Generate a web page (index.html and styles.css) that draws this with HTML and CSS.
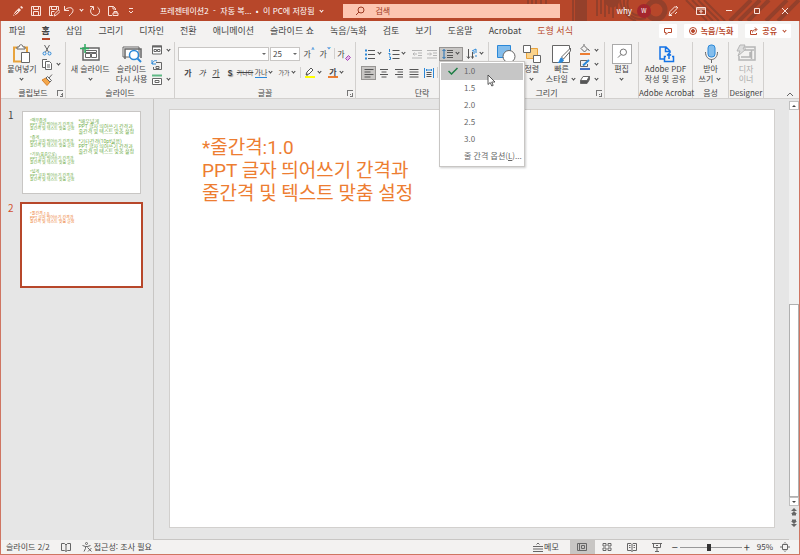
FILE: index.html
```html
<!DOCTYPE html>
<html lang="ko">
<head>
<meta charset="UTF-8">
<meta name="viewport" content="width=device-width, initial-scale=1.0">
<title>프레젠테이션2</title>
<link rel="stylesheet" href="styles.css">
</head>
<body>
<div class="window">

    <header class="titlebar">
        <div class="quick-access">
            <button class="qa" aria-label="펜"><svg width="12" height="12" viewBox="0 0 12 12"><path d="M1 11l2-4 4-4 2 2-4 4zM8 2l1.500-1 1.500 1.500L10 4z" fill="#fbe3dc" stroke="none"/><path d="M2 10l4-4" stroke="#b7472a"/></svg></button>
            <button class="qa" aria-label="저장"><svg width="12" height="12" viewBox="0 0 12 12"><path d="M1.500 1.500h9v9h-9zM3.500 1.500v3h5v-3M3.500 10.500v-4h5v4"/></svg></button>
            <button class="qa" aria-label="다른 이름으로 저장"><svg width="12" height="12" viewBox="0 0 12 12"><path d="M5 10.500H1.500v-9h9V5M3.500 1.500v3h5v-3M3.500 10v-3.500h3M6 11l1-2.500L10.500 5 12 6.500 8.500 10z"/></svg></button>
            <button class="qa" aria-label="실행 취소"><svg width="12" height="12" viewBox="0 0 12 12"><path d="M1.500 1v4.500H6M1.500 5.500C4 2 10 1.500 10 5.500 10 7.500 8 9 6 11"/></svg><i class="caret"></i></button>
            <button class="qa" aria-label="다시 실행"><svg width="12" height="12" viewBox="0 0 12 12"><path d="M1 1.500h3.500V5M4 2a4.500 4.500 0 1 0 4.500.2"/></svg></button>
            <button class="qa" aria-label="인쇄 미리 보기"><svg width="12" height="12" viewBox="0 0 12 12"><path d="M5 10.500H1.500v-9h5l2 2V5M6 1.500V4h2.500M6 10.500V8h5v2.500zM7 8V6.500h3V8"/></svg></button>
            <button class="qa" aria-label="사용자 지정"><svg width="8" height="8" viewBox="0 0 8 8"><path d="M2 1.500h4M2 4l2 2 2-2"/></svg></button>
            <span class="doc-name">프레젠테이션2&nbsp; -&nbsp; 자동 복...&nbsp; •&nbsp; 이 PC에 저장됨 <i class="caret"></i></span>
        </div>
        <label class="search">
            <svg width="10" height="10" viewBox="0 0 10 10"><circle cx="6" cy="4" r="3"/><path d="M4 6L1 9"/></svg>
            <input type="text" placeholder="검색" aria-label="검색">
        </label>
        <div class="account">
            <svg class="pattern" viewBox="0 0 280 21" preserveAspectRatio="xMaxYMin slice">
                <path d="M8 0v8M12 0v5M16 0v12M21 0v6M26 0v12M53 0v21M77 0v16M81 0v14M85 0v17M89 0v14M93 0v18M97 0v10" stroke-width="2"/>
                <path d="M61 0v21" stroke-width="12"/>
                <circle cx="92" cy="0" r="7" class="fill"/>
                <circle cx="136" cy="10" r="9" stroke-width="5"/>
                <path d="M108 0a12 12 0 0 0 20 12M104 0a17 17 0 0 0 22 18M100 0a24 24 0 0 0 16 21" stroke-width="2"/>
                <path d="M166 0l21 21M172 0l21 21M178 0l21 21M184 0l21 21" stroke-width="2"/>
                <path d="M210 21L231 0M219 21L240 0M228 21L249 0M246 21L267 0M258 21l21-21" stroke-width="4"/>
            </svg>
            <span class="user">why</span>
            <span class="avatar">W</span>
            <button class="win-btn" aria-label="그리기"><svg width="12" height="12" viewBox="0 0 12 12"><path d="M2 10.500l1-4 5-5 2 2-5 5zM8 9l2-2M9 1l2 2M2 10.500h3"/></svg></button>
            <button class="win-btn" aria-label="리본 표시 옵션"><svg width="12" height="12" viewBox="0 0 12 12"><path d="M1.500 2.500h9v7h-9zM1.500 4h9M6 8.500V5.500M4.500 7L6 5.500 7.500 7"/></svg></button>
            <button class="win-btn" aria-label="최소화"><svg width="12" height="12" viewBox="0 0 12 12"><path d="M3 5.500h6"/></svg></button>
            <button class="win-btn" aria-label="최대화"><svg width="12" height="12" viewBox="0 0 12 12"><path d="M3.500 3.500h5v5h-5z"/></svg></button>
            <button class="win-btn" aria-label="닫기"><svg width="12" height="12" viewBox="0 0 12 12"><path d="M3 3l6 6M9 3L3 9"/></svg></button>
        </div>
    </header>

    <nav class="tabs">
        <a href="#">파일</a>
        <a href="#" class="active">홈</a>
        <a href="#">삽입</a>
        <a href="#">그리기</a>
        <a href="#">디자인</a>
        <a href="#">전환</a>
        <a href="#">애니메이션</a>
        <a href="#">슬라이드 쇼</a>
        <a href="#">녹음/녹화</a>
        <a href="#">검토</a>
        <a href="#">보기</a>
        <a href="#">도움말</a>
        <a href="#">Acrobat</a>
        <a href="#" class="context">도형 서식</a>
        <div class="tab-actions">
            <button aria-label="메모"><svg width="8" height="8" viewBox="0 0 8 8"><path d="M.5 1.500h7v4H4l-2 2v-2H.5z"/></svg></button>
            <button><svg width="8" height="8" viewBox="0 0 8 8"><circle cx="4" cy="4" r="3.500"/><circle cx="4" cy="4" r="1.500" fill="#b7472a"/></svg>녹음/녹화</button>
            <button><svg width="8" height="8" viewBox="0 0 8 8"><path d="M2.500 3.500h-2v4h6V6M2.500 5.500c0-2 1.500-3 4-3M5 .5l2 2-2 2"/></svg>공유<i class="caret"></i></button>
        </div>
    </nav>

    <div class="ribbon">
        <section class="group">
            <div class="group-body">
                <button class="big">
                    <svg width="20" height="20" viewBox="0 0 20 20"><path d="M5 3.500H2v14h8M12 3.500h3V8" stroke="#e8a33d" stroke-width="2"/><path d="M5 5V3h2c0-3 4-3 4 0h2v2z" fill="#fff"/><path d="M9.500 8.500h8v10h-8z" fill="#fff"/></svg>
                    <span>붙여넣기</span><i class="caret"></i>
                </button>
                <div class="stack">
                    <button class="mini" aria-label="잘라내기"><svg width="12" height="12" viewBox="0 0 12 12"><path d="M3.500 1l4 7M8.500 1l-4 7"/><circle cx="3.500" cy="9.500" r="1.500" stroke="#2b88d8"/><circle cx="8.500" cy="9.500" r="1.500" stroke="#2b88d8"/></svg></button>
                    <button class="mini" aria-label="복사"><svg width="12" height="12" viewBox="0 0 12 12"><path d="M4 8.500H1.500v-8H6M4.500 2.500h4l2 2v6h-6z" fill="#fff"/><path d="M6 6h3M6 8h3"/></svg><i class="caret"></i></button>
                    <button class="mini" aria-label="서식 복사"><svg width="12" height="12" viewBox="0 0 12 12"><path d="M1 6l4-2 4 4-3 3.500z" fill="#f3a64a" stroke="#d9822b"/><path d="M5 4l1.500-1.500 4 4L9 8zM8 4l3-3.500"/></svg></button>
                </div>
            </div>
            <div class="group-label">클립보드<button class="launcher" aria-label="클립보드 옵션"></button></div>
        </section>

        <section class="group">
            <div class="group-body">
                <button class="big">
                    <svg width="20" height="20" viewBox="0 0 20 20"><path d="M3 4h16v12H3z" fill="#fff" stroke-width="1.500"/><path d="M5.500 6.500h11v2h-11zM5.500 9.500h5v4h-5zM11.500 9.500h5v4h-5z"/><path d="M5 0v9M0 4.500h9" stroke="#2fae62" stroke-width="1.500"/></svg>
                    <span>새 슬라이드</span><i class="caret"></i>
                </button>
                <button class="big">
                    <svg width="20" height="20" viewBox="0 0 20 20"><path d="M1 3h16v10H1z" fill="#fff"/><path d="M3 15V5h16v9" stroke-width="1.500"/><circle cx="12" cy="11" r="4.500" fill="#fff" stroke="#2b88d8" stroke-width="1.500"/><path d="M15.500 14.500L19 18" stroke="#2b88d8" stroke-width="2"/></svg>
                    <span>슬라이드</span><span>다시 사용</span>
                </button>
                <div class="stack">
                    <button class="mini" aria-label="레이아웃"><svg width="12" height="12" viewBox="0 0 12 12"><path d="M1.500 2v8h9V2z" fill="#fff"/><path d="M1 2.500h10" stroke-width="2"/><path d="M3 5.500h2.500v2H3zM6.500 5.500H9v2H6.500z"/></svg><i class="caret"></i></button>
                    <button class="mini" aria-label="다시 설정"><svg width="12" height="12" viewBox="0 0 12 12"><path d="M5 3.500h5.500v7h-8V8M5 7.500h3v2H5z"/><path d="M1 1v4h4M1 5c1-3 3-4 5-3" stroke="#2b88d8"/></svg></button>
                    <button class="mini" aria-label="구역"><svg width="12" height="12" viewBox="0 0 12 12"><path d="M1 1.500h10" stroke="#5fb985" stroke-width="2"/><path d="M1.500 4.500h9v6h-9zM4 6.500h4v2H4z" fill="#fff"/></svg><i class="caret"></i></button>
                </div>
            </div>
            <div class="group-label">슬라이드</div>
        </section>

        <section class="group">
            <div class="group-body rows">
                <div class="row">
                    <div class="combo font-name"><input type="text" aria-label="글꼴"><i class="arrow"></i></div>
                    <div class="combo font-size"><input type="text" value="25" aria-label="글꼴 크기"><i class="arrow"></i></div>
                    <button class="tool wide">가<sup>^</sup></button>
                    <button class="tool wide">가<sup>ˇ</sup></button>
                    <i class="divider"></i>
                    <button class="tool wide" aria-label="서식 지우기">가<svg class="eraser" width="6" height="6" viewBox="0 0 6 6"><path d="M.5 3.500l3-3 2 2-3 3z" stroke="#a846b9" fill="#e3b8ea"/></svg></button>
                </div>
                <div class="row indent">
                    <button class="tool"><b>가</b></button>
                    <button class="tool"><em>가</em></button>
                    <button class="tool"><u>가</u></button>
                    <button class="tool shadow"><b>S</b></button>
                    <button class="tool wide small"><s>가나다</s></button>
                    <button class="tool menu spacing"><span>가나</span><i class="caret"></i></button>
                    <button class="tool menu small">가가<i class="caret"></i></button>
                    <i class="divider"></i>
                    <button class="tool menu" aria-label="강조 색"><svg width="12" height="12" viewBox="0 0 12 12"><path d="M2 7.500l1-2.500 4-4 2 2-4 4z" fill="#fff"/><path d="M2 8h2"/><path d="M1 10h10" stroke="#ff0" stroke-width="2"/></svg><i class="caret"></i></button>
                    <button class="tool menu font-color"><b>가</b><i class="caret"></i></button>
                </div>
            </div>
            <div class="group-label">글꼴<button class="launcher" aria-label="글꼴 옵션"></button></div>
        </section>

        <section class="group paragraph">
            <div class="group-body rows">
                <div class="row">
                    <button class="tool menu" aria-label="글머리 기호"><svg width="12" height="12" viewBox="0 0 12 12"><path d="M4 2.500h7M4 6.500h7M4 10.500h7"/><path d="M1 2.500h2M1 6.500h2M1 10.500h2" stroke="#2b88d8" stroke-width="2"/></svg><i class="caret"></i></button>
                    <button class="tool menu" aria-label="번호 매기기"><svg width="12" height="12" viewBox="0 0 12 12"><path d="M4.500 2.500h7M4.500 6.500h7M4.500 10.500h7"/><path d="M1.500 1v3M.5 5.500h1.500v1.500H1M1 9h1.500v2.500H1" stroke="#2b88d8"/></svg><i class="caret"></i></button>
                    <button class="tool" disabled aria-label="내어쓰기"><svg width="10" height="10" viewBox="0 0 10 10"><path d="M0 1.500h10M6 4h4M6 6.500h4M0 9h10M5 5H1M2.500 3.500L1 5l1.500 1.500"/></svg></button>
                    <button class="tool" disabled aria-label="들여쓰기"><svg width="10" height="10" viewBox="0 0 10 10"><path d="M0 1.500h10M6 4h4M6 6.500h4M0 9h10M0 5h4M3 3.500L4.500 5 3 6.500"/></svg></button>
                    <div class="line-spacing">
                        <button class="tool menu pressed" aria-label="줄 간격"><svg width="12" height="12" viewBox="0 0 12 12"><path d="M5 2.500h6M5 4.500h6M5 7.500h6M5 9.500h6"/><path d="M2 1.500v9M.5 3L2 1.500 3.500 3M.5 9L2 10.500 3.500 9" stroke="#1f6fb5"/></svg><i class="caret"></i></button>
                        <div class="dropdown">
                            <button class="selected"><svg width="10" height="8" viewBox="0 0 10 8"><path d="M.5 4l3 3L9.500 1" stroke="#1e7e45" stroke-width="1.500"/></svg>1.0</button>
                            <button>1.5</button>
                            <button>2.0</button>
                            <button>2.5</button>
                            <button>3.0</button>
                            <button>줄 간격 옵션(<u>L</u>)...</button>
                            <svg class="pointer" width="9" height="13" viewBox="0 0 9 13"><path d="M1 1v9.500l2.200-2 1.600 3.500 1.400-.6L4.700 8H8z" fill="#fff" stroke="#333" stroke-width=".8"/></svg>
                        </div>
                    </div>
                    <button class="tool menu" aria-label="텍스트 방향"><svg width="12" height="12" viewBox="0 0 12 12"><path d="M2.500 1v9M1 8.500l1.500 2L4 8.500M6.500 4v6M5.500 8.500l1 2 1-2"/><path d="M6 3l4-2v4M8 3v3M10 7v2" stroke="#2b88d8"/></svg><i class="caret"></i></button>
                </div>
                <div class="row">
                    <button class="tool pressed" aria-label="왼쪽 맞춤"><svg width="10" height="10" viewBox="0 0 10 10"><path d="M.5 1.500h9M.5 4h6M.5 6.500h9M.5 9h6"/></svg></button>
                    <button class="tool" aria-label="가운데 맞춤"><svg width="10" height="10" viewBox="0 0 10 10"><path d="M1 1.500h8M2.500 4h5M1 6.500h8M2.500 9h5"/></svg></button>
                    <button class="tool" aria-label="오른쪽 맞춤"><svg width="10" height="10" viewBox="0 0 10 10"><path d="M1 1.500h8M3.500 4H9M1 6.500h8M3.500 9H9"/></svg></button>
                    <button class="tool" aria-label="양쪽 맞춤"><svg width="10" height="10" viewBox="0 0 10 10"><path d="M.5 1.500h9M.5 4h9M.5 6.500h9M.5 9h9"/></svg></button>
                    <button class="tool" aria-label="균등 분할"><svg width="10" height="10" viewBox="0 0 10 10"><path d="M2.500 4.500h5M2.500 6.500h5M2.500 8.500h5"/><path d="M.5 0v10M9.500 0v10M2 2h6M3 1L2 2l1 1M7 1l1 1-1 1" stroke="#2b88d8"/></svg></button>
                    <i class="divider"></i>
                </div>
            </div>
            <div class="group-label">단락</div>
        </section>

        <section class="group drawing">
            <div class="group-body">
                <button class="big">
                    <svg width="20" height="20" viewBox="0 0 20 20"><path d="M1.500 1.500h13v12h-13z" fill="#83bdec" stroke="#2b88d8"/><circle cx="13" cy="12.500" r="6" fill="#fff"/></svg>
                    <span>도형</span><i class="caret"></i>
                </button>
                <button class="big">
                    <svg width="20" height="20" viewBox="0 0 20 20"><path d="M4.500 4.500h11v10h-11z" fill="#fbd38b" stroke="#e8a33d"/><path d="M1.500 1.500h7v7h-7zM11.500 11.500h7v7h-7z" fill="#fff"/></svg>
                    <span>정렬</span><i class="caret"></i>
                </button>
                <button class="big">
                    <svg width="20" height="20" viewBox="0 0 20 20"><path d="M1.500 1.500h17v17h-17z" fill="#fff"/><path d="M19.500 4l-9 9 2 2 7-8z" fill="#fff"/><path d="M6 19c3-1 2-5 4.500-5.500L13 16c-1 3-4 3-7 3z" fill="#2b88d8" stroke="none"/></svg>
                    <span>빠른</span><span>스타일 <i class="caret"></i></span>
                </button>
                <div class="stack">
                    <button class="mini" aria-label="도형 채우기"><svg width="12" height="12" viewBox="0 0 12 12"><path d="M2 4.500l3-3L8.500 5 5.500 8zM5 1.500V0M9 5l1.500 2"/><path d="M1 10h10" stroke="#ed7d31" stroke-width="2"/></svg><i class="caret"></i></button>
                    <button class="mini" aria-label="도형 윤곽선"><svg width="12" height="12" viewBox="0 0 12 12"><path d="M8 1.500H1.500v6h7V5"/><path d="M4 6.500L10 1" stroke="#2b88d8" stroke-width="2"/><path d="M1 10h10" stroke="#4472c4" stroke-width="2"/></svg><i class="caret"></i></button>
                    <button class="mini" aria-label="도형 효과"><svg width="12" height="12" viewBox="0 0 12 12"><path d="M1.500 6.500L4 2.500h6.500L8 6.500z" fill="#fff"/><path d="M1.500 6.500v3H8l2.500-4v-3L8 6.500z" fill="#555"/></svg><i class="caret"></i></button>
                </div>
            </div>
            <div class="group-label">그리기<button class="launcher" aria-label="그리기 옵션"></button></div>
        </section>

        <section class="group">
            <div class="group-body">
                <button class="big boxed">
                    <svg width="20" height="20" viewBox="0 0 20 20"><circle cx="11.500" cy="8" r="3.500"/><path d="M9 10.500L5.500 14"/></svg>
                    <span>편집</span><i class="caret"></i>
                </button>
            </div>
        </section>

        <section class="group">
            <div class="group-body">
                <button class="big">
                    <svg width="20" height="20" viewBox="0 0 20 20"><g stroke="#1473e6" stroke-width="1.500"><path d="M8 15H4V3h6l4 4v2M9.500 3v4.500H14M10 12.500H8.500v5h9v-5H16M13 15v-5M11 11.500l2-2 2 2"/></g></svg>
                    <span>Adobe PDF</span><span>작성 및 공유</span>
                </button>
            </div>
            <div class="group-label">Adobe Acrobat</div>
        </section>

        <section class="group">
            <div class="group-body">
                <button class="big">
                    <svg width="20" height="20" viewBox="0 0 20 20"><rect x="7" y="1" width="7" height="12" rx="3" fill="#83bdec" stroke="#2b88d8"/><path d="M4.500 8c0 10 12 10 12 0M10.500 15.500V19"/></svg>
                    <span>받아</span><span>쓰기 <i class="caret"></i></span>
                </button>
            </div>
            <div class="group-label">음성</div>
        </section>

        <section class="group">
            <div class="group-body">
                <button class="big" disabled>
                    <svg width="20" height="20" viewBox="0 0 20 20"><path d="M8 3h11v13H3v-4M5 13h9V8M8 6h10M15.500 6v9" stroke-width="1.500"/><path d="M4 1h5L7 5h3L2 12l2-5H1z" fill="#ddd"/></svg>
                    <span>디자</span><span>이너</span>
                </button>
            </div>
            <div class="group-label">Designer</div>
        </section>

        <button class="collapse" aria-label="리본 축소"><svg width="8" height="6" viewBox="0 0 8 6"><path d="M1 5l3-3 3 3"/></svg></button>
    </div>

    <main class="workspace">
        <aside class="slides">
            <div class="slide-item">
                <span class="number">1</span>
                <div class="thumb green">
                    <div>
                        <p>*매우좁게<br>PPT 글자 띄어쓰기 간격과<br>줄간격 및 텍스트 맞춤 설정</p>
                        <p>*좁게<br>PPT 글자 띄어쓰기 간격과<br>줄간격 및 텍스트 맞춤 설정</p>
                        <p>*기본(표준으로)<br>PPT 글자 띄어쓰기 간격과<br>줄간격 및 텍스트 맞춤 설정</p>
                        <p>*넓게<br>PPT 글자 띄어쓰기 간격과<br>줄간격 및 텍스트 맞춤 설정</p>
                    </div>
                    <div class="loose">
                        <p>*매우넓게<br>PPT 글자 띄어쓰기 간격과<br>줄간격 및 텍스트 맞춤 설정</p>
                        <p>*기타간격(10pt넓음)<br>PPT 글자 띄어쓰기 간격과<br>줄간격 및 텍스트 맞춤 설정</p>
                    </div>
                </div>
            </div>
            <div class="slide-item current">
                <span class="number">2</span>
                <div class="thumb orange">
                    <p>*줄간격:1.0<br>PPT 글자 띄어쓰기 간격과<br>줄간격 및 텍스트 맞춤 설정</p>
                </div>
            </div>
        </aside>
        <div class="canvas">
            <article class="slide">
                <p>*줄간격:1.0<br>PPT 글자 띄어쓰기 간격과<br>줄간격 및 텍스트 맞춤 설정</p>
            </article>
        </div>
        <div class="scrollbar">
            <button aria-label="위로"><i class="tri up"></i></button>
            <div class="track"><div class="handle"></div></div>
            <button aria-label="아래로"><i class="tri down"></i></button>
            <button class="page" aria-label="이전 슬라이드"><svg width="8" height="8" viewBox="0 0 8 8"><path d="M4 0l3 3H1zM4 3l3 3H1zM2 6h4v1.500H2z"/></svg></button>
            <button class="page" aria-label="다음 슬라이드"><svg width="8" height="8" viewBox="0 0 8 8"><path d="M4 8L1 5h6zM4 5L1 2h6zM2 .5h4V2H2z"/></svg></button>
        </div>
    </main>

    <footer class="statusbar">
        <span class="count">슬라이드 2/2</span>
        <button aria-label="맞춤법"><svg width="10" height="10" viewBox="0 0 10 10"><path d="M.5 1.500h3L5 3l1.500-1.500h3v7h-3L5 9.500 3.500 8.500h-3zM5 3v6"/></svg></button>
        <button class="access"><svg width="10" height="10" viewBox="0 0 10 10"><circle cx="4.500" cy="1.500" r="1"/><path d="M.5 3.500l3 1v2L2 9.500M8.500 3.500l-3 1v1M3.500 4.500h2M6 6l3.500 3.500M9.500 6L6 9.500"/></svg>접근성: 조사 필요</button>
        <div class="views">
            <button class="notes"><svg width="10" height="10" viewBox="0 0 10 10"><path d="M0 4.500h10M0 7h10M0 9.500h10M3.500 2.500L5 1l1.500 1.500"/></svg>메모</button>
            <button class="view active" aria-label="기본"><svg width="10" height="10" viewBox="0 0 10 10"><path d="M.5 1.500h9v7h-9zM2.500 1.500v7M4.500 3.500h3v3h-3z"/></svg></button>
            <button class="view" aria-label="여러 슬라이드"><svg width="10" height="10" viewBox="0 0 10 10"><path d="M1 1.500h3v2.500H1zM6 1.500h3v2.500H6zM1 6h3v2.500H1zM6 6h3v2.500H6z"/></svg></button>
            <button class="view" aria-label="읽기용 보기"><svg width="10" height="10" viewBox="0 0 10 10"><path d="M.5 1.500h3.500L5 2.500l1-1h3.500v7H6l-1 1-1-1H.5zM5 2.500v7M2 3.500h1.500M2 5.500h1.500M6.500 3.500H8M6.500 5.500H8"/></svg></button>
            <button class="view" aria-label="슬라이드 쇼"><svg width="10" height="10" viewBox="0 0 10 10"><path d="M0 1.500h10M1.500 1.500v4h7v-4M5 5.500v4M3 9.500h4M4 3.500h2"/></svg></button>
            <button class="step" aria-label="축소">−</button>
            <input type="range" class="zoom" min="10" max="190" value="95" aria-label="확대/축소">
            <button class="step" aria-label="확대">+</button>
            <span class="percent">95%</span>
            <button aria-label="창에 맞춤"><svg width="10" height="10" viewBox="0 0 10 10"><path d="M2.500 2.500h5v5h-5zM4 1.500l1-1 1 1M4 8.500l1 1 1-1M1.500 4l-1 1 1 1M8.500 4l1 1-1 1"/></svg></button>
        </div>
    </footer>
</div>
</body>
</html>
```
FILE: styles.css
```css
* { margin: 0; padding: 0; box-sizing: border-box; }
body {
    font-family: "Noto Sans CJK KR", "Open Sans", sans-serif;
    font-size: 8px; line-height: 10px; color: #444;
}
button {
    font: inherit; color: inherit; background: none; border: none;
    display: flex; align-items: center; justify-content: center;
}
input { font: inherit; color: inherit; border: none; background: none; min-width: 0; }
a { color: inherit; text-decoration: none; }
svg { fill: none; stroke: #666; flex: none; display: block; }
button:disabled { color: #aaa; }
button:disabled svg { stroke: #b5b5b5; }
.window {
    display: flex; flex-direction: column;
    height: 100vh;
    border: 1px solid #cf7562; border-top: none;
    background: #e6e6e6;
}
.caret {
    display: inline-block; width: 3px; height: 3px; flex: none;
    border-right: 1px solid; border-bottom: 1px solid;
    transform: rotate(45deg);
    vertical-align: middle; margin: 0 2px 2px;
}

/* title bar */
.titlebar {
    display: grid; grid-template-columns: 343fr 216fr 240fr;
    align-items: center;
    height: 21px; margin: 0 -1px;
    background: #b7472a; color: #fff;
    position: relative;
}
.titlebar svg { stroke: #fbe3dc; }
.quick-access { display: flex; align-items: center; padding-left: 9px; white-space: nowrap; }
.qa { min-width: 18px; height: 20px; }
.qa .caret { margin: 0 3px 2px 5px; }
.doc-name { margin-left: 20px; }
.doc-name .caret { margin-left: 3px; }
.search {
    display: flex; align-items: center; gap: 10px;
    height: 14px; padding-left: 12px;
    background: #fdc6b1; color: #9c3a22;
    position: relative; z-index: 1;
}
.search svg { stroke: #9c3a22; }
.search input::placeholder { color: #9c3a22; opacity: 1; }
.account { display: flex; align-items: center; justify-content: flex-end; padding-right: 1px; }
.account > * { position: relative; }
.account .pattern {
    position: absolute; right: 0; top: 0; width: 35%; height: 21px;
    stroke: #94402b;
}
.pattern .fill { fill: #94402b; }
.user { margin-right: 5px; }
.avatar {
    width: 14px; height: 14px; border-radius: 50%; margin-right: 8px;
    background: #a4262c; font-size: 6px; line-height: 14px; text-align: center;
}
.win-btn { width: 28px; height: 20px; }

/* tabs */
.tabs {
    display: flex; align-items: center; gap: 16px;
    height: 20px; padding: 0 8px;
    background: #f3f2f1; font-size: 9px; white-space: nowrap;
}
.tabs a { line-height: 15px; border-bottom: 2px solid transparent; }
.tabs .active { border-color: #b7472a; font-weight: bold; }
.tabs .context { color: #b7472a; }
.tab-actions { display: flex; gap: 7px; margin-left: auto; color: #b7472a; font-weight: bold; font-size: 8px; }
.tab-actions button { height: 14px; gap: 4px; padding: 0 5px; background: #fff; border-radius: 1px; }
.tab-actions .caret { margin: 0 0 2px 2px; }
.tab-actions svg { stroke: #b7472a; }

/* ribbon */
.ribbon {
    display: grid;
    grid-template-columns: 65px 109px 181px 133px 116px 34px 54px 36px 35px 1fr;
    height: 58px; padding: 1px 0 0;
    background: #f3f2f1; border-bottom: 1px solid #d2d0ce;
    white-space: nowrap;
}
.group { display: flex; flex-direction: column; border-right: 1px solid #d2d0ce; padding-top: 1px; }
.group-body { display: flex; flex: 1; justify-content: center; }
.group-label { text-align: center; position: relative; }
.launcher {
    position: absolute; right: 2px; top: 2px;
    width: 6px; height: 6px;
    border-left: 1px solid #777; border-top: 1px solid #777;
}
.launcher::after {
    content: ""; width: 3px; height: 3px; margin: 2px 0 0 2px;
    border-right: 1px solid #777; border-bottom: 1px solid #777;
    background: linear-gradient(45deg, transparent 40%, #777 40%, #777 60%, transparent 60%);
}
.big { flex-direction: column; justify-content: flex-start; padding: 1px 3px 0; }
.big > .caret { margin-top: 3px; }
.boxed svg { background: #fff; border: 1px solid #aaa; }
.stack { display: flex; flex-direction: column; justify-content: space-around; align-items: flex-start; padding: 0 0 1px 1px; }
.mini { height: 12px; }
.mini .caret { margin-left: 4px; }
.drawing .big { padding: 1px 1px 0; min-width: 26px; }
.rows { flex-direction: column; justify-content: flex-start; gap: 4px; padding: 3px 3px 0; }
.row { display: flex; align-items: center; height: 15px; }
.indent { padding-left: 3px; }
.combo {
    display: flex; align-items: center; height: 14px; margin-right: 1px;
    background: #fff; border: 1px solid #c8c6c4; padding: 0 2px;
}
.combo input { flex: 1; }
.font-name { width: 91px; }
.font-size { width: 30px; }
.arrow { border: 2px solid transparent; border-top-color: #666; margin-top: 2px; }
.tool { width: 14px; height: 14px; flex: none; }
.tool svg { stroke: #555; }
.tool.wide { width: 16px; }
.tool.menu { width: 23px; }
.tool.small { font-size: 6px; }
.paragraph .rows { padding-left: 5px; }
.paragraph .tool { width: 15px; }
.paragraph .tool.menu { width: 24px; }
.tool sup { font-size: 6px; line-height: 6px; color: #2b88d8; font-weight: bold; align-self: flex-start; }
.eraser { align-self: flex-end; }
.shadow { text-shadow: 1px 1px 1px #999; }
.spacing span { border-bottom: 1px solid #2b88d8; font-size: 7px; }
.font-color b { border-bottom: 2px solid #ed7d31; line-height: 9px; padding: 0 1px; }
.divider { width: 1px; height: 11px; background: #d2d0ce; margin: 0 1px; }
.pressed { background: #c8c6c4; outline: 1px solid #979593; outline-offset: -1px; }
.collapse { justify-self: end; align-self: end; margin: 0 5px 1px 0; }

/* line spacing menu */
.line-spacing { position: relative; }
.dropdown {
    position: absolute; left: 0; top: 14px; z-index: 5;
    width: 86px; padding: 1px;
    background: #fff; border: 1px solid #c8c6c4;
    box-shadow: 1px 1px 2px rgba(0,0,0,0.2);
}
.dropdown button {
    position: relative; width: 100%; height: 17px;
    justify-content: flex-start; padding-left: 23px; color: #666;
}
.dropdown .selected { background: #c6c6c6; padding-left: 7px; gap: 6px; }
.dropdown .pointer { position: absolute; left: 47px; top: 12px; }

/* workspace */
.workspace { display: flex; flex: 1; min-height: 0; }
.slides { width: 153px; padding: 12px 11px 0 7px; border-right: 1px solid #c8c6c4; }
.slide-item { display: flex; gap: 8px; margin-bottom: 10px; }
.number { width: 5px; font-size: 10px; line-height: 8px; }
.thumb, .slide { font-family: Roboto, "Noto Sans CJK KR", sans-serif; }
.thumb {
    flex: 1; display: flex; gap: 4px; margin: 0 1px;
    aspect-ratio: 118 / 82; padding: 7px 7px 0;
    background: #fff; border: 1px solid #c8c6c4;
    font-size: 4px; line-height: 4px; white-space: nowrap; overflow: hidden;
}
.thumb p { margin-bottom: 5px; }
.thumb .loose { font-size: 5px; line-height: 5px; }
.green { color: #70ad47; }
.orange { color: #ed7d31; }
.current .number { color: #d35230; }
.current .thumb { border-color: #fff; outline: 2px solid #b7472a; }
.canvas { flex: 1; display: flex; padding: 10px 14px 11px 15px; border-bottom: 1px solid #c8c6c4; }
.slide {
    flex: 1; padding: 26px 32px;
    background: #fff; border: 1px solid #d2d0ce;
    color: #ed7d31; font-size: 19px; line-height: 23px;
}
.scrollbar { width: 10px; display: flex; flex-direction: column; padding: 2px 0 12px; }
.scrollbar button { height: 9px; background: #fff; border: 1px solid #c0c0c0; }
.scrollbar .page { height: 10px; background: none; border: none; margin-top: 1px; }
.page svg { fill: #666; stroke: none; }
.track { flex: 1; display: flex; flex-direction: column; justify-content: flex-end; background: #f1f1f1; }
.handle { height: 50%; background: #fff; border: 1px solid #b0b0b0; }
.tri { border: 2px solid transparent; }
.up { border-bottom-color: #444; margin-bottom: 2px; }
.down { border-top-color: #444; margin-top: 2px; }

/* status bar */
.statusbar {
    display: flex; align-items: center; gap: 11px;
    height: 15px; padding: 0 9px 0 5px;
    background: #f3f2f1; border-bottom: 1px solid #cf7562;
    margin-bottom: -1px; white-space: nowrap;
}
.access { gap: 2px; }
.views { display: flex; align-items: center; margin-left: auto; align-self: stretch; }
.notes { margin-right: 11px; gap: 1px; }
.view { width: 25px; align-self: stretch; }
.view.active { background: #c8c6c4; }
.step { width: 10px; font-size: 11px; }
.zoom { appearance: none; width: 62px; height: 10px; background: linear-gradient(#999, #999) center / 100% 1px no-repeat; }
.zoom::-webkit-slider-thumb { appearance: none; width: 4px; height: 7px; background: #333; }
.percent { margin: 0 7px 0 5px; }
```
